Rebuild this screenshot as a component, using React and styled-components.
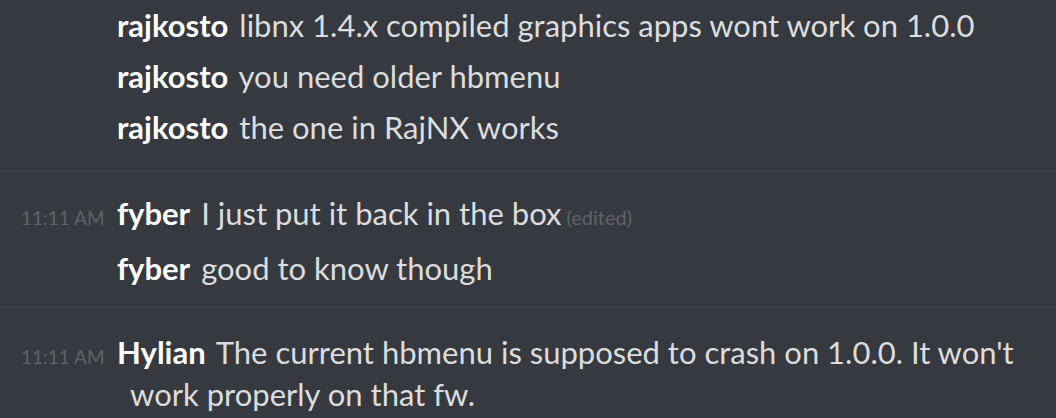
import React from 'react';
import styled, { createGlobalStyle } from 'styled-components';

const Global = createGlobalStyle`
  html, body {
    margin: 0;
    background: #36393f;
  }
  body {
    font-family: Lato, "Noto Sans", sans-serif;
    overflow: hidden;
  }
`;

const Chat = styled.div`
  width: 1056px;
  height: 418px;
  background: #36393f;
`;

const Group = styled.div`
  padding: ${p => p.$top}px 0 ${p => p.$bottom}px;
  border-top: ${p => (p.$divider ? '1px solid #40434a' : 'none')};
`;

const Message = styled.div`
  padding: 4px 0 5px 130px;
  text-indent: -109px;
  line-height: 42px;
  font-size: 31px;
  color: #dcddde;
`;

const Time = styled.span`
  display: inline-block;
  text-indent: 0;
  width: 82px;
  margin-right: 14px;
  font-size: 19px;
  line-height: 1;
  color: #5f6267;
  white-space: nowrap;
  visibility: ${p => (p.$show ? 'visible' : 'hidden')};
`;

const Author = styled.span`
  color: #ffffff;
  font-weight: 700;
  margin-right: 3px;
`;

const Edited = styled.span`
  font-size: 20px;
  color: #5f6267;
  margin-left: 5px;
`;

const groups = [
  {
    top: 0,
    bottom: 18,
    messages: [
      { author: 'rajkosto', text: 'libnx 1.4.x compiled graphics apps wont work on 1.0.0' },
      { author: 'rajkosto', text: 'you need older hbmenu' },
      { author: 'rajkosto', text: 'the one in RajNX works' },
    ],
  },
  {
    top: 16,
    bottom: 13,
    divider: true,
    messages: [
      { time: '11:11 AM', author: 'fyber', text: 'I just put it back in the box', edited: true },
      { author: 'fyber', text: 'good to know though' },
    ],
  },
  {
    top: 19,
    bottom: 0,
    divider: true,
    messages: [
      {
        time: '11:11 AM',
        author: 'Hylian',
        text: "The current hbmenu is supposed to crash on 1.0.0. It won't work properly on that fw.",
      },
    ],
  },
];

const App = () => (
  <Chat>
    <Global />
    {groups.map((g, i) => (
      <Group key={i} $top={g.top} $bottom={g.bottom} $divider={g.divider}>
        {g.messages.map((m, j) => (
          <Message key={j}>
            <Time $show={!!m.time}>{m.time || '11:11 AM'}</Time>
            <Author>{m.author}</Author>{' '}
            {m.text}
            {m.edited && <Edited>(edited)</Edited>}
          </Message>
        ))}
      </Group>
    ))}
  </Chat>
);

export default App;
